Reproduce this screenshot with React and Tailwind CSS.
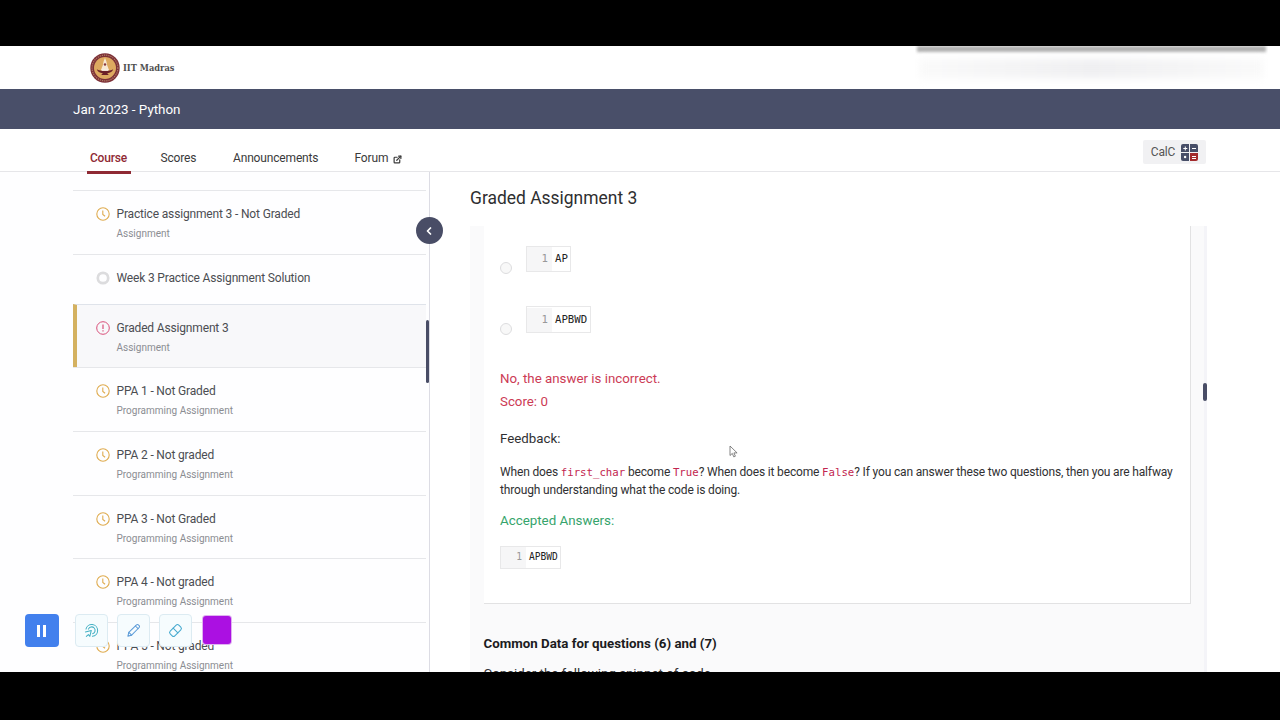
import { ChevronLeft, ExternalLink } from "lucide-react";
import clsx from "clsx";

const lessons = [
    { title: 'Practice assignment 3 - Not Graded', type: 'Assignment', status: 'pending', height: 'h-[64px]' },
    { title: 'Week 3 Practice Assignment Solution', status: 'empty', height: 'h-[50px]' },
    { title: 'Graded Assignment 3', type: 'Assignment', status: 'overdue', height: 'h-[63.4px]', active: true },
    { title: 'PPA 1 - Not Graded', type: 'Programming Assignment', status: 'pending', height: 'h-[63.8px]' },
    { title: 'PPA 2 - Not graded', type: 'Programming Assignment', status: 'pending', height: 'h-[63.8px]' },
    { title: 'PPA 3 - Not Graded', type: 'Programming Assignment', status: 'pending', height: 'h-[63.4px]' },
    { title: 'PPA 4 - Not graded', type: 'Programming Assignment', status: 'pending', height: 'h-[63.8px]' },
    { title: 'PPA 5 - Not graded', type: 'Programming Assignment', status: 'pending', height: 'h-[63.8px]' },
];

const Logo = () => (
    <svg width="30" height="30" viewBox="0 0 30 30" className="shrink-0">
        <circle cx="15" cy="15" r="14.7" fill="#7d3038" />
        <circle cx="15" cy="15" r="12.9" fill="none" stroke="#b58468" strokeWidth="1.1" strokeDasharray="1.2 1" />
        <circle cx="15" cy="15" r="11" fill="#dda960" />
        <path d="M6.8 16.3c1.600 1 4.600 1.500 8.200 1.500s6.600-.5 8.200-1.500c-.5 2.300-3 3.600-6 4l1.600 1.700h-7.600l1.600-1.700c-3-.4-5.500-1.700-6-4z" fill="#6b2028" />
        <path d="M15 5c.7 2 1.500 3 1.700 5 .1 1.500 1 3.500 2 6.300h-7.400c1-2.800 1.900-4.800 2-6.300.2-2 1-3 1.700-5z" fill="#f8e8d4" />
        <circle cx="15" cy="11.500" r="1.200" fill="#8a3a3e" />
        <path d="M11 16.300h8l-.8 1.400h-6.400z" fill="#fff" />
    </svg>
);

const CalcIcon = () => (
    <svg width="17" height="17" viewBox="0 0 17 17">
        <path d="M2 0h6v8H0V2a2 2 0 0 1 2-2z" fill="#474e68" />
        <path d="M9 0h6a2 2 0 0 1 2 2v6H9z" fill="#474e68" />
        <path d="M0 9h8v8H2a2 2 0 0 1-2-2z" fill="#474e68" />
        <path d="M9 9h8v6a2 2 0 0 1-2 2H9z" fill="#a32a2c" />
        <path d="M2.300 4.500h4M4.300 2.500v4M11 4.500h4M11 12.500h4M11 14.500h4" stroke="#fff" strokeWidth="1" />
        <circle cx="4.100" cy="13" r="1.200" fill="#fff" />
    </svg>
);

const StatusIcon = ({ status }) => {
    if (status === 'empty') {
        return (
            <svg width="14" height="14" viewBox="0 0 14 14" className="shrink-0">
                <circle cx="7" cy="7" r="5.200" fill="none" stroke="#dcdcde" strokeWidth="2.700" />
            </svg>
        );
    }

    if (status === 'overdue') {
        return (
            <svg width="14" height="14" viewBox="0 0 14 14" fill="none" stroke="#d9507a" strokeWidth="1" className="shrink-0">
                <circle cx="7" cy="7" r="6.300" />
                <path d="M7 3.500v4.600M7 9.300v1.200" strokeWidth="1.200" />
            </svg>
        );
    }

    return (
        <svg width="14" height="14" viewBox="0 0 14 14" fill="none" stroke="#dfac50" strokeWidth="1.100" className="shrink-0">
            <circle cx="7" cy="7" r="6.200" />
            <path d="M6.800 3.500v3.900l2.300 1.800" />
        </svg>
    );
};

const LessonItem = ({ lesson }) => (
    <li
        className={clsx(
            "flex shrink-0 items-start border-t pt-[15px]",
            lesson.height,
            lesson.active
                ? "border-t-[#dfe3ea] border-l-4 border-l-[#d4b160] bg-[#f8f8fa] pl-[19px]"
                : "border-t-[#e6e7ea] pl-[23px]"
        )}
    >
        <div className="mt-px flex">
            <StatusIcon status={lesson.status} />
        </div>
        <div className="ml-[6.5px] whitespace-nowrap">
            <p className="text-[12px] leading-[17px] tracking-[-0.16px] text-[#4b4d52]">{lesson.title}</p>
            {lesson.type && <p className="mt-[3.6px] text-[10px] leading-[13px] text-[#8b8d92]">{lesson.type}</p>}
        </div>
    </li>
);

const CodeBox = ({ code, className }) => (
    <div className={clsx("flex w-fit border border-[#e8e8e9] bg-white font-['DejaVu_Sans_Mono',monospace]", className)}>
        <span className="flex w-[25px] items-center justify-end bg-[#f6f6f7] pr-1 text-[#999]">1</span>
        <span className="flex items-center pl-[3px] pr-[2.5px] text-[#222]">{code}</span>
    </div>
);

const Code = ({ children }) => (
    <code className="font-['DejaVu_Sans_Mono',monospace] text-[10.7px] leading-none tracking-normal text-[#c2254f]">{children}</code>
);

const Radio = () => <span className="h-3 w-3 rounded-full border border-[#dddddf] bg-[#f8f8f8]" />;

const ToolButton = ({ children }) => (
    <div className="flex h-[33px] w-[33px] items-center justify-center rounded-[4px] border border-[#dcebf2] bg-[#f6fcfe]">
        <svg width="15" height="15" viewBox="0 0 16 16" fill="none" strokeWidth="1.100" strokeLinecap="round" strokeLinejoin="round">
            {children}
        </svg>
    </div>
);

const Toolbar = () => (
    <div className="absolute left-[25px] top-[614px] flex items-center">
        <div className="flex h-[33px] w-[34px] items-center justify-center gap-[3px] rounded-[4px] bg-[#4280ed] pr-px">
            <span className="h-3 w-[3px] bg-white" />
            <span className="h-3 w-[3px] bg-white" />
        </div>
        <div className="ml-4 flex gap-[9px]">
            <ToolButton>
                <g stroke="#43b0c4">
                    <path d="M2.100 6.500A6.300 6.300 0 1 1 9 14.200" />
                    <path d="M4.700 6.500A3.700 3.700 0 1 1 9.200 11.400" />
                    <path d="M1.500 9.500l6.300-1.600-1.600 6.300-1.500-1.900-2.200 2" />
                </g>
            </ToolButton>
            <ToolButton>
                <g stroke="#5b9bd8">
                    <path d="M2 14l1-4 8.200-8a1.400 1.400 0 0 1 2 0l.8.800a1.400 1.400 0 0 1 0 2L6 13z" />
                    <path d="M3 10l3 3M10 3.200L12.900 6" />
                </g>
            </ToolButton>
            <ToolButton>
                <g stroke="#45a9cf">
                    <rect x="1.500" y="4.500" width="13" height="7" rx="2" transform="rotate(-45 8 8)" />
                    <path d="M5.500 5.500l5 5" />
                </g>
            </ToolButton>
        </div>
        <div className="mb-px ml-[10.500px] h-[28px] w-[28px] rounded-[3px] bg-[#ab10e2] ring-1 ring-[#dfb2f0]" />
    </div>
);

const Header = () => (
    <header className="shrink-0 bg-white">
        <div className="relative flex h-[43px] items-center pl-[90px]">
            <Logo />
            <span className="ml-[3px] whitespace-nowrap font-['DejaVu_Serif_Condensed','DejaVu_Serif',serif] text-[9.200px] font-bold text-[#505050]">
                IIT Madras
            </span>
            <div className="absolute right-3 top-0 h-[43px] w-[353px] overflow-hidden">
                <div className="mx-0.5 h-[6px] bg-[#b0b0b0] blur-[1.500px]" />
                <div className="mx-1 mt-[7px] h-[19px] bg-gradient-to-r from-[#fafafa] via-[#efeff1] to-[#fafafa] blur-[4px]" />
            </div>
        </div>
        <div className="flex h-10 items-center bg-[#494f69] pl-[73px] pt-0.5">
            <h1 className="text-[13.400px] text-white">Jan 2023 - Python</h1>
        </div>
        <nav className="flex h-[43px] items-start border-b border-[#e6e6e9] text-[12px] tracking-[-0.16px] text-[#3a3a3a]">
            <div className="relative z-10 ml-[87px] flex h-[45px] w-11 shrink-0 justify-center border-b-[3px] border-[#8f2a34] pr-px pt-5 font-medium leading-[18px] text-[#8f2a34]">
                Course
            </div>
            <span className="ml-[29.500px] w-[37px] whitespace-nowrap pt-5 leading-[18px]">Scores</span>
            <span className="ml-[35.500px] w-[85px] whitespace-nowrap pt-5 leading-[18px]">Announcements</span>
            <span className="ml-[36.500px] flex items-center gap-[5px] pt-5 leading-[18px]">
                Forum <ExternalLink size={9} strokeWidth={3.2} className="mt-[3px]" />
            </span>
            <div className="ml-auto mr-[74px] mt-[11px] flex h-6 w-[63px] items-center justify-center gap-[6px] rounded-[2px] bg-[#f1f1f3] text-[#555]">
                CalC <CalcIcon />
            </div>
        </nav>
    </header>
);

const Sidebar = () => (
    <aside className="relative flex w-[430px] shrink-0 border-r border-[#dcdce4] bg-[#fefeff]">
        <ul className="mt-[18px] ml-[73px] flex w-[353px] flex-col overflow-hidden">
            {lessons.map((lesson) => (
                <LessonItem key={lesson.title} lesson={lesson} />
            ))}
        </ul>
        <div className="absolute right-0 top-[148px] h-[63px] w-[3px] rounded-full bg-[#494d66]" />
        <button className="absolute -right-[13.500px] top-[45px] flex h-[27px] w-[27px] items-center justify-center rounded-full bg-[#494d66] pr-px text-white">
            <ChevronLeft size={12} strokeWidth={3.5} />
        </button>
    </aside>
);

const Content = () => (
    <main className="flex w-[777px] flex-col pl-10">
        <h2 className="mt-[14px] h-6 text-[17.450px] leading-6 text-[#2e2e30]">Graded Assignment 3</h2>
        <div className="relative mt-4 flex-1 overflow-hidden bg-[#fafafb] pl-[13.500px] pr-4">
            <section className="h-[378px] border-b border-r border-[#e2e2e3] bg-white pl-[16.500px] pt-5">
                <div className="flex h-[60px] gap-[14px]">
                    <div className="flex pt-[16px]"><Radio /></div>
                    <CodeBox code="AP" className="h-[26px] text-[10.700px]" />
                </div>
                <div className="flex h-[61px] gap-[14px]">
                    <div className="flex pt-[17px]"><Radio /></div>
                    <CodeBox code="APBWD" className="h-[27px] pt-px text-[10.700px]" />
                </div>
                <div className="text-[13.300px] leading-[23px] text-[#cc3b55]">
                    <p>No, the answer is incorrect.</p>
                    <p>Score: 0</p>
                </div>
                <p className="mt-[14px] text-[13.300px] leading-[23px] text-[#303032]">Feedback:</p>
                <p className="mt-[14px] whitespace-nowrap text-[12px] leading-[17.500px] tracking-[-0.16px] text-[#303032]">
                    When does <Code>first_char</Code> become <Code>True</Code>? When does it become <Code>False</Code>? If you can answer these two questions, then you are halfway
                    <br />
                    through understanding what the code is doing.
                </p>
                <p className="mt-[10px] text-[13.350px] leading-[23px] text-[#36a46c]">Accepted Answers:</p>
                <CodeBox code="APBWD" className="mt-[14px] h-[23px] text-[9.600px]" />
            </section>
            <h3 className="mt-[30px] text-[13.300px] font-bold leading-5 text-[#1c1c1e]">Common Data for questions (6) and (7)</h3>
            <p className="mt-[10px] text-[13.300px] leading-5 text-[#303032]">Consider the following snippet of code.</p>
            <div className="absolute right-0 top-0 h-full w-[3px] bg-[#f4f4f8]" />
            <div className="absolute right-0 top-[157px] h-[18px] w-[4px] rounded-full bg-[#494d66]" />
        </div>
    </main>
);

const Cursor = () => (
    <svg width="9" height="13" viewBox="0 0 9 13" className="absolute left-[729px] top-[445px]">
        <path d="M1 1v9.500l2.300-2.100 1.500 3.500 1.600-.700-1.500-3.300h3.200z" fill="#fff" stroke="#666" strokeWidth=".8" />
    </svg>
);

export default function App() {
    return (
        <div className="relative flex h-[720px] w-[1280px] flex-col overflow-hidden bg-black pb-12 pt-[46px] font-[Roboto,sans-serif]">
            <Header />
            <div className="flex min-h-0 flex-1 bg-white">
                <Sidebar />
                <Content />
            </div>
            <Toolbar />
            <Cursor />
        </div>
    );
}
